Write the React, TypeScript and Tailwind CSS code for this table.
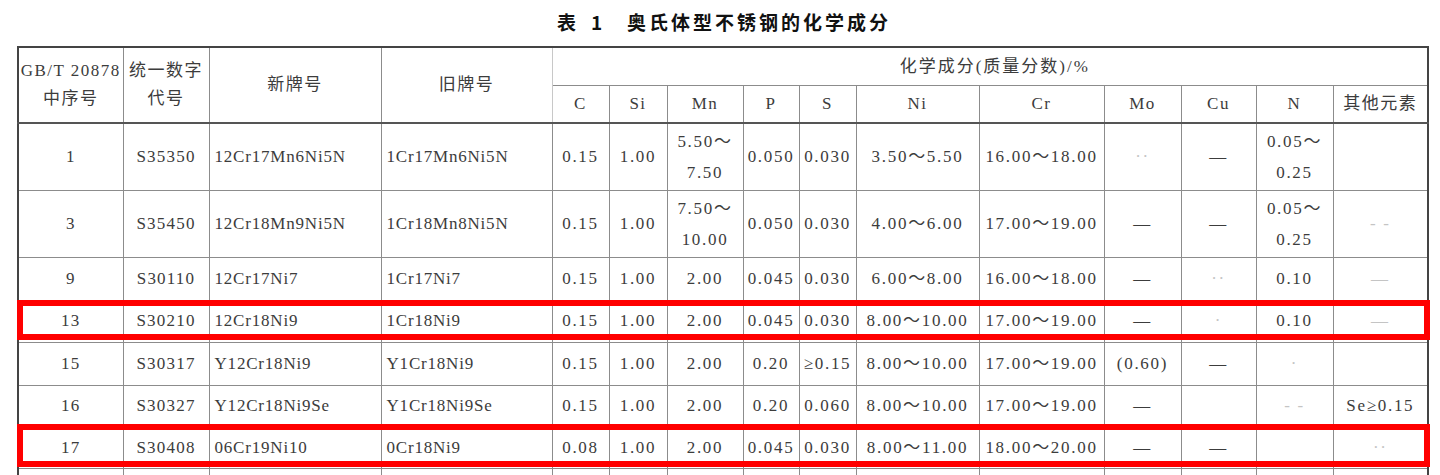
import React from "react";

type Cell = string | { l: string[] } | { f: string };

const rows: { h: string; cells: Cell[] }[] = [
  {
    h: "h-[67px]",
    cells: ["1", "S35350", "12Cr17Mn6Ni5N", "1Cr17Mn6Ni5N", "0.15", "1.00", { l: ["5.50～", "7.50"] }, "0.050", "0.030", "3.50～5.50", "16.00～18.00", { f: "··" }, "—", { l: ["0.05～", "0.25"] }, ""],
  },
  {
    h: "h-[67px]",
    cells: ["3", "S35450", "12Cr18Mn9Ni5N", "1Cr18Mn8Ni5N", "0.15", "1.00", { l: ["7.50～", "10.00"] }, "0.050", "0.030", "4.00～6.00", "17.00～19.00", "—", "—", { l: ["0.05～", "0.25"] }, { f: "- -" }],
  },
  {
    h: "h-[43px]",
    cells: ["9", "S30110", "12Cr17Ni7", "1Cr17Ni7", "0.15", "1.00", "2.00", "0.045", "0.030", "6.00～8.00", "16.00～18.00", "—", { f: "··" }, "0.10", { f: "—" }],
  },
  {
    h: "h-[42px]",
    cells: ["13", "S30210", "12Cr18Ni9", "1Cr18Ni9", "0.15", "1.00", "2.00", "0.045", "0.030", "8.00～10.00", "17.00～19.00", "—", { f: "·" }, "0.10", { f: "—" }],
  },
  {
    h: "h-[43px]",
    cells: ["15", "S30317", "Y12Cr18Ni9", "Y1Cr18Ni9", "0.15", "1.00", "2.00", "0.20", "≥0.15", "8.00～10.00", "17.00～19.00", "(0.60)", "—", { f: "·" }, ""],
  },
  {
    h: "h-[42px]",
    cells: ["16", "S30327", "Y12Cr18Ni9Se", "Y1Cr18Ni9Se", "0.15", "1.00", "2.00", "0.20", "0.060", "8.00～10.00", "17.00～19.00", "—", "", { f: "- -" }, "Se≥0.15"],
  },
  {
    h: "h-[41px]",
    cells: ["17", "S30408", "06Cr19Ni10", "0Cr18Ni9", "0.08", "1.00", "2.00", "0.045", "0.030", "8.00～11.00", "18.00～20.00", "—", "—", "", { f: "··" }],
  },
  {
    h: "h-[30px]",
    cells: ["", "", "", "", "", "", "", "", "", "", "", "", "", "", ""],
  },
];

const base = "border border-[#8c8c8c] p-0 align-middle text-[17px] text-[#3c3c3c] whitespace-nowrap";

function cellClass(i: number) {
  if (i === 2 || i === 3) return base + " text-left pl-[5px] tracking-[0.8px]";
  if (i < 2) return base + " text-center tracking-[1.2px]";
  return base + " text-center tracking-[1.7px]";
}

function renderCell(c: Cell) {
  if (typeof c === "string") return c;
  if ("l" in c)
    return (
      <div className="flex flex-col items-center leading-[31px]">
        {c.l.map((s, k) => (
          <span key={k}>{s}</span>
        ))}
      </div>
    );
  return <span className="text-[#c4c4c4]">{c.f}</span>;
}

const th = "border border-[#8c8c8c] p-0 align-middle text-center font-normal text-[17px] text-[#3c3c3c] tracking-[1.5px] whitespace-nowrap";

export default function App() {
  return (
    <div className="w-[1440px] h-[475px] overflow-hidden bg-white font-['Liberation_Serif','Noto_Sans_CJK_SC',serif]">
      <div className="h-[46px] flex items-center justify-center pl-[8px] pb-[2px]">
        <div className="flex items-baseline text-[19px] font-bold text-[#111] tracking-[3px] font-['Noto_Sans_CJK_SC',sans-serif]">
          <span>表</span>
          <span className="ml-[12px]">1</span>
          <span className="ml-[22px]">奥氏体型不锈钢的化学成分</span>
        </div>
      </div>
      <div className="relative ml-[17px] w-[1411px]">
        <table className="table-fixed border-collapse border-2 border-[#444] w-[1411px]">
          <colgroup>
            <col className="w-[105px]" />
            <col className="w-[86px]" />
            <col className="w-[172px]" />
            <col className="w-[171px]" />
            <col className="w-[57px]" />
            <col className="w-[58px]" />
            <col className="w-[76px]" />
            <col className="w-[56px]" />
            <col className="w-[57px]" />
            <col className="w-[123px]" />
            <col className="w-[125px]" />
            <col className="w-[77px]" />
            <col className="w-[75px]" />
            <col className="w-[77px]" />
            <col className="w-[95px]" />
          </colgroup>
          <thead>
            <tr className="h-[38px] border-t-2 border-[#444]">
              <th rowSpan={2} className={th + " tracking-[0.6px] leading-[28px]"}>
                <div>GB/T 20878</div>
                <div className="tracking-[1.5px]">中序号</div>
              </th>
              <th rowSpan={2} className={th + " leading-[28px]"}>
                <div>统一数字</div>
                <div>代号</div>
              </th>
              <th rowSpan={2} className={th}>新牌号</th>
              <th rowSpan={2} className={th + " border-r-[#c8c8c8]"}>旧牌号</th>
              <th colSpan={11} className={th + " tracking-[2px] pt-[1px] pl-[10px]"}>化学成分(质量分数)/%</th>
            </tr>
            <tr className="h-[38px] border-b-2 border-[#555]">
              <th className={th}>C</th>
              <th className={th}>Si</th>
              <th className={th}>Mn</th>
              <th className={th}>P</th>
              <th className={th}>S</th>
              <th className={th}>Ni</th>
              <th className={th}>Cr</th>
              <th className={th}>Mo</th>
              <th className={th}>Cu</th>
              <th className={th}>N</th>
              <th className={th}>其他元素</th>
            </tr>
          </thead>
          <tbody>
            {rows.map((r, ri) => (
              <tr key={ri} className={r.h}>
                {r.cells.map((c, ci) => (
                  <td key={ci} className={cellClass(ci)}>
                    {renderCell(c)}
                  </td>
                ))}
              </tr>
            ))}
          </tbody>
        </table>
        <div className="absolute left-0 top-[254px] w-[1413px] h-[40px] border-[6px] border-[#ff0000]" />
        <div className="absolute left-0 top-[378px] w-[1413px] h-[43px] border-[6px] border-[#ff0000]" />
      </div>
    </div>
  );
}
